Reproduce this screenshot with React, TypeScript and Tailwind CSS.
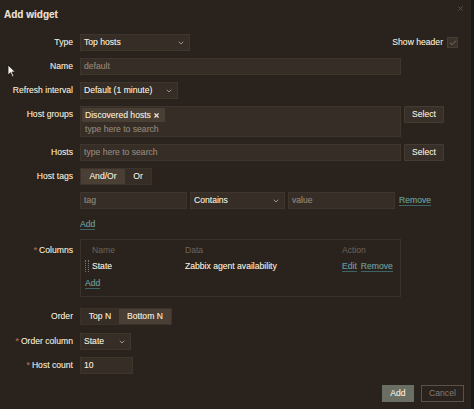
import { ChevronDown, X, Check } from "lucide-react"

const font = { fontFamily: '"Liberation Sans", Arial, sans-serif' }

function Label({ text, required }: { text: string; required?: boolean }) {
  return (
    <div className="w-[73px] shrink-0 text-right leading-[17px] text-[#ebe0cf]">
      {required && <span className="mr-[2px] text-[#a9503b]">*</span>}
      {text}
    </div>
  )
}

function Select({ value, width }: { value: string; width: string }) {
  return (
    <div
      className={`${width} flex h-[17px] items-center justify-between border border-[#3e352d] bg-[#352d26] pl-[3px] pr-[4px] text-[#efe5d5]`}
    >
      <span className="whitespace-nowrap">{value}</span>
      <ChevronDown className="h-[8px] w-[8px] text-[#b3a899]" strokeWidth={2.5} />
    </div>
  )
}

function Input({ value, placeholder, width }: { value?: string; placeholder?: string; width: string }) {
  return (
    <div
      className={`${width} flex h-[17px] items-center border border-[#3e352d] bg-[#352d26] px-[3px]`}
    >
      {value ? (
        <span className="text-[#efe5d5]">{value}</span>
      ) : (
        <span className="text-[#7a6f63]">{placeholder}</span>
      )}
    </div>
  )
}

function Link({ text }: { text: string }) {
  return (
    <span className="border-b border-[#3f6465] leading-[10px] text-[#4f8a8c]">{text}</span>
  )
}

function Button({ text }: { text: string }) {
  return (
    <div className="flex h-[17px] w-[40px] items-center justify-center rounded-[1px] border border-[#443b32] bg-[#382f28] text-[#efe5d5]">
      {text}
    </div>
  )
}

function Segmented({ items, active }: { items: { label: string; w: string }[]; active: number }) {
  return (
    <div className="flex h-[17px] border border-[#3b322a] bg-[#352d26]">
      {items.map((it, i) => (
        <div
          key={it.label}
          className={`${it.w} flex items-center justify-center text-[#efe5d5] ${
            i === active ? "bg-[#4a3f35]" : ""
          }`}
        >
          {it.label}
        </div>
      ))}
    </div>
  )
}

export default function App() {
  return (
    <div
      style={font}
      className="relative flex h-[409px] w-[474px] flex-col border-r-[3px] border-[#1c1713] bg-[#2a231d] text-[8.6px] text-[#ebe0cf] [text-shadow:0_0_0.6px_rgba(240,228,210,0.55)]"
    >
      {/* Header */}
      <div className="flex h-[28px] items-center justify-between pl-[4px] pr-[7px]">
        <h1 className="text-[10px] font-bold text-[#e6dccd]">Add widget</h1>
        <X className="mb-[12px] h-[7px] w-[7px] text-[#5c544c]" strokeWidth={3} />
      </div>

      {/* Form */}
      <div className="flex flex-col pt-[6px]">
        <div className="flex items-start gap-[7px]">
          <Label text="Type" />
          <Select value="Top hosts" width="w-[110px]" />
          <div className="ml-auto mr-[13px] flex h-[17px] items-center gap-[4px]">
            <span>Show header</span>
            <div className="flex h-[11px] w-[11px] items-center justify-center border border-[#463d34] bg-[#3a3129]">
              <Check className="h-[8px] w-[8px] text-[#8c8479]" strokeWidth={2.5} />
            </div>
          </div>
        </div>

        <div className="mt-[7px] flex items-start gap-[7px]">
          <Label text="Name" />
          <Input placeholder="default" width="w-[321px]" />
        </div>

        <div className="mt-[7px] flex items-start gap-[7px]">
          <Label text="Refresh interval" />
          <Select value="Default (1 minute)" width="w-[98px]" />
        </div>

        <div className="mt-[7px] flex items-start gap-[7px]">
          <Label text="Host groups" />
          <div className="flex h-[31px] w-[321px] flex-col items-start border border-[#3e352d] bg-[#352d26] px-[1px] pt-[1px]">
            <div className="flex h-[14px] w-[83px] items-center justify-between whitespace-nowrap bg-[#4a3f35] pl-[3px] pr-[5px] text-[#efe5d5]">
              <span>Discovered hosts</span>
              <X className="h-[7px] w-[7px] text-[#efe5d5]" strokeWidth={4} />
            </div>
            <span className="mt-[1px] pl-[3px] text-[#7a6f63]">type here to search</span>
          </div>
          <div className="-ml-[4px]">
            <Button text="Select" />
          </div>
        </div>

        <div className="mt-[7px] flex items-start gap-[7px]">
          <Label text="Hosts" />
          <Input placeholder="type here to search" width="w-[321px]" />
          <div className="-ml-[4px]">
            <Button text="Select" />
          </div>
        </div>

        <div className="mt-[7px] flex items-start gap-[7px]">
          <Label text="Host tags" />
          <Segmented
            items={[
              { label: "And/Or", w: "w-[44px]" },
              { label: "Or", w: "w-[26px]" },
            ]}
            active={0}
          />
        </div>

        <div className="mt-[7px] flex items-center gap-[3px] pl-[80px]">
          <Input placeholder="tag" width="w-[107px]" />
          <Select value="Contains" width="w-[95px]" />
          <Input placeholder="value" width="w-[107px]" />
          <span className="ml-[1px]">
            <Link text="Remove" />
          </span>
        </div>

        <div className="mt-[9px] pl-[80px] leading-[12px]">
          <Link text="Add" />
        </div>

        <div className="mt-[9px] flex items-start gap-[7px]">
          <div className="pt-[3px]">
            <Label text="Columns" required />
          </div>
          <div className="flex h-[58px] w-[321px] flex-col border border-[#3a3129] px-[4px] pt-[4px]">
            <div className="flex h-[13px] items-center text-[#6e6459] [text-shadow:none]">
              <span className="w-[100px] pl-[7px]">Name</span>
              <span className="w-[157px]">Data</span>
              <span>Action</span>
            </div>
            <div className="mt-[2px] flex h-[14px] items-center text-[#efe5d5]">
              <span className="flex w-[100px] items-center gap-[3px]">
                <span className="h-[12px] w-[4px] border-x border-dotted border-[#7c7266]" />
                State
              </span>
              <span className="w-[157px]">Zabbix agent availability</span>
              <span className="flex gap-[4px]">
                <Link text="Edit" />
                <Link text="Remove" />
              </span>
            </div>
            <div className="mt-[4px] leading-[12px]">
              <Link text="Add" />
            </div>
          </div>
        </div>

        <div className="mt-[11px] flex items-start gap-[7px]">
          <Label text="Order" />
          <Segmented
            items={[
              { label: "Top N", w: "w-[38px]" },
              { label: "Bottom N", w: "w-[52px]" },
            ]}
            active={1}
          />
        </div>

        <div className="mt-[8px] flex items-start gap-[7px]">
          <Label text="Order column" required />
          <Select value="State" width="w-[51px]" />
        </div>

        <div className="mt-[7px] flex items-start gap-[7px]">
          <Label text="Host count" required />
          <Input value="10" width="w-[53px]" />
        </div>
      </div>

      {/* Footer */}
      <div className="mt-auto mb-[7px] flex justify-end gap-[7px] pr-[7px]">
        <div className="flex h-[17px] w-[32px] items-center justify-center bg-[#6a6e63] text-[#efe8da]">
          Add
        </div>
        <div className="flex h-[17px] w-[43px] items-center justify-center border border-[#5a524a] text-[#857b71] [text-shadow:none]">
          Cancel
        </div>
      </div>

      {/* Mouse pointer */}
      <svg
        className="absolute left-[7px] top-[64px]"
        width="9"
        height="14"
        viewBox="0 0 9 14"
      >
        <path d="M1 1 L1 11 L3.5 8.7 L5.5 13 L7 12.3 L5 8 L8.3 8 Z" fill="#f4f1ec" stroke="#1a1612" strokeWidth="0.8" />
      </svg>
    </div>
  )
}
